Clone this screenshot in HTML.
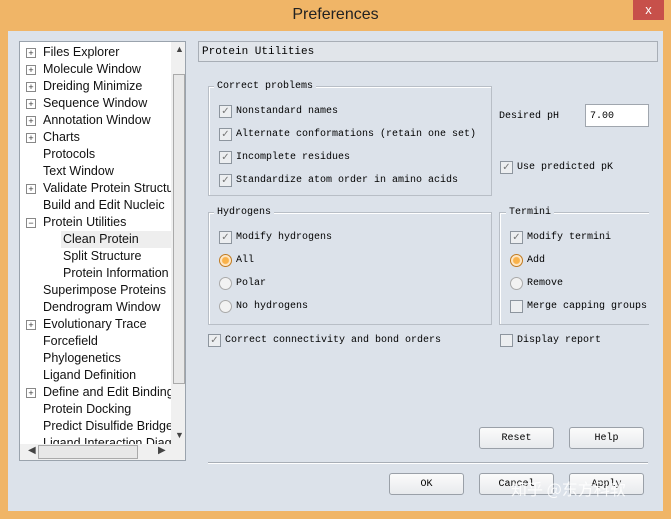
<!DOCTYPE html>
<html><head><style>
body{margin:0;width:671px;height:519px;background:#f0b567;position:relative;overflow:hidden;font-family:"Liberation Mono",monospace;font-size:10px;color:#000}
.a{position:absolute}
.title{left:0;top:6px;width:671px;text-align:center;font:16px "Liberation Sans",sans-serif;color:#222}
.close{left:633px;top:0;width:31px;height:20px;background:#c7504a;color:#fff;font:13px "Liberation Sans",sans-serif;text-align:center;line-height:20px}
.client{left:8px;top:31px;width:655px;height:480px;background:#dce2ea}
.tree{left:19px;top:41px;width:167px;height:420px;background:#fff;border:1px solid #9aa3ad;box-sizing:border-box;overflow:hidden;font:12.5px "Liberation Sans",sans-serif;color:#111}
.it{position:absolute;white-space:nowrap;height:17px;line-height:17px}
.pl{position:absolute;width:8px;height:8px;border:1px solid #888;background:#fff;font:9px/8px "Liberation Sans";text-align:center;color:#333}
.grp{border:1px solid #b8bec6;box-shadow:1px 1px 0 #fff inset;box-sizing:border-box}
.gl{background:#dce2ea;padding:0 3px}
.cb{position:absolute;width:11px;height:11px;border:1px solid #8d959e;background:#eceef0;font:10px/11px "Liberation Sans";color:#777;text-align:center}
.rb{position:absolute;width:11px;height:11px;border:1px solid #aaa;border-radius:50%;background:#f2f2f2}
.rb.on{border-color:#c07a20;background:radial-gradient(circle,#f9b24a 0 3px,#fde7c6 4px)}
.btn{position:absolute;width:75px;height:22px;border:1px solid #9aa0a8;border-radius:3px;background:linear-gradient(#fbfbfb,#e8eaed);box-sizing:border-box;text-align:center;line-height:21px}
.t{position:absolute;white-space:nowrap;line-height:13px;margin-top:0px}
</style></head><body>
<div class="a title">Preferences</div>
<div class="a close">x</div>
<div class="a client"></div>
<div class="a tree">
<div class="it" style="left:23px;top:2px">Files Explorer</div>
<div class="it" style="left:23px;top:19px">Molecule Window</div>
<div class="it" style="left:23px;top:36px">Dreiding Minimize</div>
<div class="it" style="left:23px;top:53px">Sequence Window</div>
<div class="it" style="left:23px;top:70px">Annotation Window</div>
<div class="it" style="left:23px;top:87px">Charts</div>
<div class="it" style="left:23px;top:104px">Protocols</div>
<div class="it" style="left:23px;top:121px">Text Window</div>
<div class="it" style="left:23px;top:138px">Validate Protein Structure</div>
<div class="it" style="left:23px;top:155px">Build and Edit Nucleic</div>
<div class="it" style="left:23px;top:172px">Protein Utilities</div>
<div class="it" style="left:41px;top:189px;background:#eee;padding-left:2px;width:120px">Clean Protein</div>
<div class="it" style="left:43px;top:206px">Split Structure</div>
<div class="it" style="left:43px;top:223px">Protein Information</div>
<div class="it" style="left:23px;top:240px">Superimpose Proteins</div>
<div class="it" style="left:23px;top:257px">Dendrogram Window</div>
<div class="it" style="left:23px;top:274px">Evolutionary Trace</div>
<div class="it" style="left:23px;top:291px">Forcefield</div>
<div class="it" style="left:23px;top:308px">Phylogenetics</div>
<div class="it" style="left:23px;top:325px">Ligand Definition</div>
<div class="it" style="left:23px;top:342px">Define and Edit Binding</div>
<div class="it" style="left:23px;top:359px">Protein Docking</div>
<div class="it" style="left:23px;top:376px">Predict Disulfide Bridges</div>
<div class="it" style="left:23px;top:393px">Ligand Interaction Diagram</div>
<div class="pl" style="left:6px;top:6px">+</div><div class="pl" style="left:6px;top:23px">+</div><div class="pl" style="left:6px;top:40px">+</div><div class="pl" style="left:6px;top:57px">+</div><div class="pl" style="left:6px;top:74px">+</div><div class="pl" style="left:6px;top:91px">+</div><div class="pl" style="left:6px;top:142px">+</div><div class="pl" style="left:6px;top:176px">−</div><div class="pl" style="left:6px;top:278px">+</div><div class="pl" style="left:6px;top:346px">+</div>
<div class="a" style="left:151px;top:0;width:15px;height:402px;background:#f0f0f0"></div>
<div class="a" style="left:153px;top:32px;width:12px;height:310px;background:#e8e8e8;border:1px solid #aaa;box-sizing:border-box"></div>
<div class="a" style="left:155px;top:2px;font-size:9px;color:#444">▲</div>
<div class="a" style="left:155px;top:388px;font-size:9px;color:#444">▼</div>
<div class="a" style="left:0;top:402px;width:166px;height:17px;background:#f0f0f0"></div>
<div class="a" style="left:18px;top:403px;width:100px;height:14px;background:#e8e8e8;border:1px solid #aaa;box-sizing:border-box"></div>
<div class="a" style="left:8px;top:403px;font-size:10px;color:#444">◀</div>
<div class="a" style="left:138px;top:403px;font-size:10px;color:#444">▶</div>
</div>
<div class="a" style="left:198px;top:41px;width:460px;height:21px;border:1px solid #a8aeb6;background:#e1e5ea;box-sizing:border-box;padding:4px 3px;font-size:11px">Protein Utilities</div>

<div class="a grp" style="left:208px;top:86px;width:284px;height:110px"></div>
<div class="t" style="left:214px;top:80px"><span class="gl">Correct problems</span></div>
<div class="cb" style="left:219px;top:105px">✓</div><div class="t" style="left:236px;top:105px">Nonstandard names</div>
<div class="cb" style="left:219px;top:128px">✓</div><div class="t" style="left:236px;top:128px">Alternate conformations (retain one set)</div>
<div class="cb" style="left:219px;top:151px">✓</div><div class="t" style="left:236px;top:151px">Incomplete residues</div>
<div class="cb" style="left:219px;top:174px">✓</div><div class="t" style="left:236px;top:174px">Standardize atom order in amino acids</div>

<div class="t" style="left:499px;top:110px">Desired pH</div>
<div class="a" style="left:585px;top:104px;width:64px;height:23px;background:#fff;border:1px solid #a0a6ae;box-sizing:border-box;padding:6px 4px">7.00</div>
<div class="cb" style="left:500px;top:161px">✓</div><div class="t" style="left:517px;top:161px">Use predicted pK</div>

<div class="a grp" style="left:208px;top:212px;width:284px;height:113px"></div>
<div class="t" style="left:214px;top:206px"><span class="gl">Hydrogens</span></div>
<div class="cb" style="left:219px;top:231px">✓</div><div class="t" style="left:236px;top:231px">Modify hydrogens</div>
<div class="rb on" style="left:219px;top:254px"></div><div class="t" style="left:236px;top:254px">All</div>
<div class="rb" style="left:219px;top:277px"></div><div class="t" style="left:236px;top:277px">Polar</div>
<div class="rb" style="left:219px;top:300px"></div><div class="t" style="left:236px;top:300px">No hydrogens</div>

<div class="a grp" style="left:499px;top:212px;width:150px;height:113px;border-right:none"></div>
<div class="t" style="left:506px;top:206px"><span class="gl">Termini</span></div>
<div class="cb" style="left:510px;top:231px">✓</div><div class="t" style="left:527px;top:231px">Modify termini</div>
<div class="rb on" style="left:510px;top:254px"></div><div class="t" style="left:527px;top:254px">Add</div>
<div class="rb" style="left:510px;top:277px"></div><div class="t" style="left:527px;top:277px">Remove</div>
<div class="cb" style="left:510px;top:300px"></div><div class="t" style="left:527px;top:300px">Merge capping groups</div>

<div class="cb" style="left:208px;top:334px">✓</div><div class="t" style="left:225px;top:334px">Correct connectivity and bond orders</div>
<div class="cb" style="left:500px;top:334px"></div><div class="t" style="left:517px;top:334px">Display report</div>

<div class="btn" style="left:479px;top:427px">Reset</div>
<div class="btn" style="left:569px;top:427px">Help</div>
<div class="a" style="left:208px;top:462px;width:440px;height:1px;background:#a8aeb6;border-bottom:1px solid #fff"></div>
<div class="btn" style="left:389px;top:473px">OK</div>
<div class="btn" style="left:479px;top:473px">Cancel</div>
<div class="btn" style="left:569px;top:473px">Apply</div>
<div class="t" style="left:511px;top:478px;font:16px 'Noto Sans CJK SC',sans-serif;line-height:20px;color:rgba(255,255,255,.85)">知乎 @东方科软</div>
</body></html>
